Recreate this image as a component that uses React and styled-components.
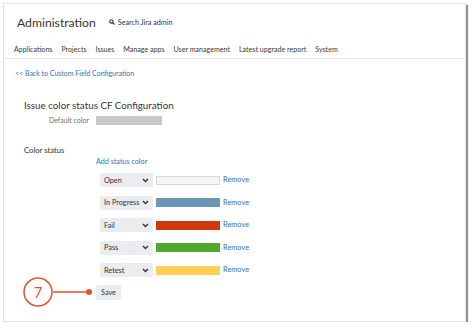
import React from "react";
import styled, { createGlobalStyle } from "styled-components";

const Global = createGlobalStyle`
  html, body { margin: 0; padding: 0; background: #fff; }
  body { font-family: "Lato", "Open Sans", sans-serif; color: #333; }
  * { box-sizing: border-box; }
`;

const Card = styled.div`
  margin: 3px 0 0 3px;
  width: 463px;
  height: 319px;
  border: 1px solid #e4e4e4;
  box-shadow: 2px 2px 1px rgba(0, 0, 0, 0.42);
  background: #fff;
  display: flex;
  flex-direction: column;
`;

const Header = styled.div`
  padding: 9px 0 2px 10px;
  border-bottom: 1px solid #e6e6e6;
`;

const TitleRow = styled.div`
  display: flex;
  align-items: center;
  height: 20px;
  padding-left: 3px;
  gap: 13px;
`;

const AppTitle = styled.div`
  font-size: 12.2px;
  line-height: 20px;
  color: #333;
`;

const Search = styled.div`
  display: flex;
  align-items: center;
  gap: 3px;
  font-size: 7.2px;
  color: #333;
  margin-top: -2px;
`;

const Tabs = styled.nav`
  display: flex;
  gap: 9px;
  margin-top: 9px;
  height: 14px;
  align-items: center;
`;

const Tab = styled.span`
  font-size: 7.1px;
  color: #3a3a3a;
`;

const Content = styled.div`
  padding: 8px 0 0 20px;
  display: flex;
  flex-direction: column;
`;

const Link = styled.a`
  color: #3572b0;
  text-decoration: none;
  font-size: 7.5px;
  line-height: 12px;
`;

const BackLink = styled(Link)`
  margin-left: -9px;
  font-size: 7px;
`;

const Heading = styled.h2`
  margin: 18px 0 0;
  font-size: 9.8px;
  font-weight: 400;
  line-height: 16px;
  color: #333;
`;

const FieldRow = styled.div`
  display: flex;
  align-items: center;
  height: 12px;
  margin-top: 1px;
`;

const FieldLabel = styled.div`
  width: 72px;
  padding-right: 7px;
  text-align: right;
  font-size: 7px;
  color: #707070;
`;

const Swatch = styled.div`
  width: ${(p) => p.$w || 64}px;
  height: 9px;
  background: ${(p) => p.$color};
  border: ${(p) => (p.$outlined ? "1px solid #d9d9d9" : "none")};
`;

const SectionTitle = styled.div`
  margin-top: 18px;
  font-size: 7.7px;
  line-height: 12px;
  color: #333;
`;

const AddLink = styled(Link)`
  margin-left: 72px;
  font-size: 7.2px;
`;

const StatusList = styled.div`
  display: flex;
  flex-direction: column;
  gap: 8.6px;
  margin-top: 5px;
  padding-left: 76px;
`;

const StatusRow = styled.div`
  display: flex;
  align-items: center;
  height: 14px;
`;

const Select = styled.div`
  width: 53px;
  height: 14px;
  background: #ebecf0;
  border-radius: 2px;
  display: flex;
  align-items: center;
  justify-content: space-between;
  padding: 0 4px;
  font-size: 7.3px;
  color: #333;
  margin-right: 3px;
`;

const RemoveLink = styled(Link)`
  margin-left: 3px;
  font-size: 7.4px;
`;

const SaveRow = styled.div`
  display: flex;
  align-items: center;
  height: 32px;
  margin-top: -1px;
  margin-left: -2px;
  gap: 2px;
`;

const SaveButton = styled.button`
  width: 25px;
  height: 15px;
  border: none;
  border-radius: 2px;
  background: #ebecf0;
  font-family: inherit;
  font-size: 7.3px;
  color: #333;
  padding: 0;
`;

const Chevron = () => (
  <svg width="7" height="5" viewBox="0 0 7 5">
    <path d="M1 1 L3.5 3.5 L6 1" fill="none" stroke="#333" strokeWidth="1.4" />
  </svg>
);

const statuses = [
  { name: "Open", color: "#f4f5f7", outlined: true },
  { name: "In Progress", color: "#6b96b6" },
  { name: "Fail", color: "#cf3a0c" },
  { name: "Pass", color: "#4fa82a" },
  { name: "Retest", color: "#ffd054" },
];

const tabs = [
  "Applications",
  "Projects",
  "Issues",
  "Manage apps",
  "User management",
  "Latest upgrade report",
  "System",
];

export default function App() {
  return (
    <>
      <Global />
      <Card>
        <Header>
          <TitleRow>
            <AppTitle>Administration</AppTitle>
            <Search>
              <svg width="6" height="6" viewBox="0 0 6 6">
                <circle cx="2.4" cy="2.4" r="1.7" fill="none" stroke="#333" strokeWidth="1.1" />
                <path d="M3.6 3.6 L5.5 5.5" stroke="#333" strokeWidth="1.2" />
              </svg>
              Search Jira admin
            </Search>
          </TitleRow>
          <Tabs>
            {tabs.map((t) => (
              <Tab key={t}>{t}</Tab>
            ))}
          </Tabs>
        </Header>
        <Content>
          <BackLink href="#">&lt;&lt; Back to Custom Field Configuration</BackLink>
          <Heading>Issue color status CF Configuration</Heading>
          <FieldRow>
            <FieldLabel>Default color</FieldLabel>
            <Swatch $color="#c8c8c8" $w={66} />
          </FieldRow>
          <SectionTitle>Color status</SectionTitle>
          <AddLink href="#">Add status color</AddLink>
          <StatusList>
            {statuses.map((s) => (
              <StatusRow key={s.name}>
                <Select>
                  {s.name}
                  <Chevron />
                </Select>
                <Swatch $color={s.color} $outlined={s.outlined} />
                <RemoveLink href="#">Remove</RemoveLink>
              </StatusRow>
            ))}
          </StatusList>
          <SaveRow>
            <svg width="72" height="32" viewBox="0 0 72 32">
              <circle cx="16" cy="16" r="14" fill="none" stroke="#e4532b" strokeWidth="1.5" />
              <text x="16" y="21.5" textAnchor="middle" fontSize="15" fill="#e4532b" fontFamily="Lato, sans-serif">7</text>
              <line x1="31" y1="16" x2="67" y2="16" stroke="#e4532b" strokeWidth="1.5" />
              <circle cx="67" cy="16" r="3" fill="#e4532b" />
            </svg>
            <SaveButton>Save</SaveButton>
          </SaveRow>
        </Content>
      </Card>
    </>
  );
}
